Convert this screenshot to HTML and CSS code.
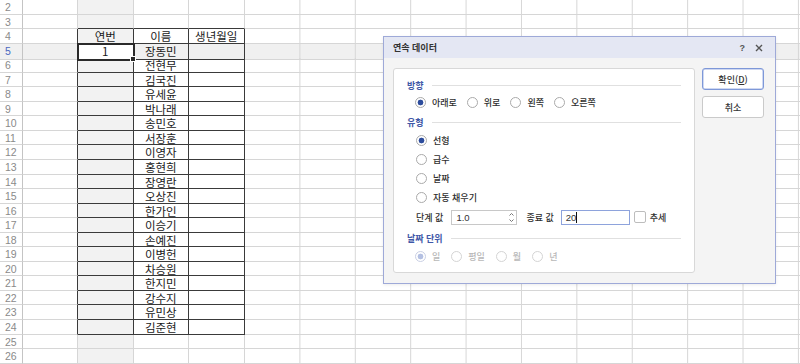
FILE: index.html
```html
<!DOCTYPE html>
<html lang="ko">
<head>
<meta charset="utf-8">
<link rel="stylesheet" href="styles.css">
</head>
<body>
<div class="sheet">
  <div class="row"><div class="rh">2</div><div class="c"></div><div class="c b"></div><div class="c"></div><div class="c"></div><div class="rest"></div></div>
  <div class="row"><div class="rh">3</div><div class="c"></div><div class="c b tt"></div><div class="c tt"></div><div class="c tt"></div><div class="rest"></div></div>
  <div class="row"><div class="rh">4</div><div class="c tl"></div><div class="c b t">연번</div><div class="c t">이름</div><div class="c t">생년월일</div><div class="rest"></div></div>
  <div class="row sel"><div class="rh">5</div><div class="c tl"></div><div class="c b t cur">1</div><div class="c t">장동민</div><div class="c t"></div><div class="rest"></div></div>
  <div class="row"><div class="rh">6</div><div class="c tl"></div><div class="c b t"></div><div class="c t">전현무</div><div class="c t"></div><div class="rest"></div></div>
  <div class="row"><div class="rh">7</div><div class="c tl"></div><div class="c b t"></div><div class="c t">김국진</div><div class="c t"></div><div class="rest"></div></div>
  <div class="row"><div class="rh">8</div><div class="c tl"></div><div class="c b t"></div><div class="c t">유세윤</div><div class="c t"></div><div class="rest"></div></div>
  <div class="row"><div class="rh">9</div><div class="c tl"></div><div class="c b t"></div><div class="c t">박나래</div><div class="c t"></div><div class="rest"></div></div>
  <div class="row"><div class="rh">10</div><div class="c tl"></div><div class="c b t"></div><div class="c t">송민호</div><div class="c t"></div><div class="rest"></div></div>
  <div class="row"><div class="rh">11</div><div class="c tl"></div><div class="c b t"></div><div class="c t">서장훈</div><div class="c t"></div><div class="rest"></div></div>
  <div class="row"><div class="rh">12</div><div class="c tl"></div><div class="c b t"></div><div class="c t">이영자</div><div class="c t"></div><div class="rest"></div></div>
  <div class="row"><div class="rh">13</div><div class="c tl"></div><div class="c b t"></div><div class="c t">홍현희</div><div class="c t"></div><div class="rest"></div></div>
  <div class="row"><div class="rh">14</div><div class="c tl"></div><div class="c b t"></div><div class="c t">장영란</div><div class="c t"></div><div class="rest"></div></div>
  <div class="row"><div class="rh">15</div><div class="c tl"></div><div class="c b t"></div><div class="c t">오상진</div><div class="c t"></div><div class="rest"></div></div>
  <div class="row"><div class="rh">16</div><div class="c tl"></div><div class="c b t"></div><div class="c t">한가인</div><div class="c t"></div><div class="rest"></div></div>
  <div class="row"><div class="rh">17</div><div class="c tl"></div><div class="c b t"></div><div class="c t">이승기</div><div class="c t"></div><div class="rest"></div></div>
  <div class="row"><div class="rh">18</div><div class="c tl"></div><div class="c b t"></div><div class="c t">손예진</div><div class="c t"></div><div class="rest"></div></div>
  <div class="row"><div class="rh">19</div><div class="c tl"></div><div class="c b t"></div><div class="c t">이병헌</div><div class="c t"></div><div class="rest"></div></div>
  <div class="row"><div class="rh">20</div><div class="c tl"></div><div class="c b t"></div><div class="c t">차승원</div><div class="c t"></div><div class="rest"></div></div>
  <div class="row"><div class="rh">21</div><div class="c tl"></div><div class="c b t"></div><div class="c t">한지민</div><div class="c t"></div><div class="rest"></div></div>
  <div class="row"><div class="rh">22</div><div class="c tl"></div><div class="c b t"></div><div class="c t">강수지</div><div class="c t"></div><div class="rest"></div></div>
  <div class="row"><div class="rh">23</div><div class="c tl"></div><div class="c b t"></div><div class="c t">유민상</div><div class="c t"></div><div class="rest"></div></div>
  <div class="row"><div class="rh">24</div><div class="c tl"></div><div class="c b t"></div><div class="c t">김준현</div><div class="c t"></div><div class="rest"></div></div>
  <div class="row"><div class="rh">25</div><div class="c"></div><div class="c b"></div><div class="c"></div><div class="c"></div><div class="rest"></div></div>
  <div class="row"><div class="rh">26</div><div class="c"></div><div class="c b"></div><div class="c"></div><div class="c"></div><div class="rest"></div></div>
</div>

<div class="dlg">
  <div class="dlg-title">
    <span class="dlg-name">연속 데이터</span>
    <span class="dlg-tools"><span class="help">?</span><svg class="close" width="8" height="8" viewBox="0 0 8 8"><path d="M1 1L7 7M7 1L1 7" stroke="#555" stroke-width="1.4"/></svg></span>
  </div>
  <div class="dlg-body">
    <div class="box">
      <div class="sec">방향</div>
      <div class="hr-radios">
        <span class="radio on"><i></i>아래로</span>
        <span class="radio"><i></i>위로</span>
        <span class="radio"><i></i>왼쪽</span>
        <span class="radio"><i></i>오른쪽</span>
      </div>
      <div class="sec sec2">유형</div>
      <div class="vr-radios">
        <span class="radio on"><i></i>선형</span>
        <span class="radio"><i></i>급수</span>
        <span class="radio"><i></i>날짜</span>
        <span class="radio"><i></i>자동 채우기</span>
      </div>
      <div class="step">
        <span>단계 값</span>
        <span class="inp spin">1.0<svg class="arr" width="5" height="11" viewBox="0 0 5 11"><path d="M0.5 3.5L2.5 1.5L4.5 3.5M0.5 7.5L2.5 9.5L4.5 7.5" fill="none" stroke="#777" stroke-width="1"/></svg></span>
        <span class="lbl2">종료 값</span>
        <span class="inp focus">20<b class="caret"></b></span>
        <span class="chk"><i></i>추세</span>
      </div>
      <div class="sec sec3">날짜 단위</div>
      <div class="hr-radios dis">
        <span class="radio on"><i></i>일</span>
        <span class="radio"><i></i>평일</span>
        <span class="radio"><i></i>월</span>
        <span class="radio"><i></i>년</span>
      </div>
    </div>
    <div class="btns">
      <div class="btn def">확인(<u>D</u>)</div>
      <div class="btn">취소</div>
    </div>
  </div>
</div>
</body>
</html>
```
FILE: styles.css
```css
html, body {
  margin: 0;
  padding: 0;
}
body {
  width: 800px;
  height: 364px;
  overflow: hidden;
  background: #fff;
  position: relative;
  font-family: "Noto Sans CJK KR", "Noto Sans", sans-serif;
}

/* ---------- sheet ---------- */
.sheet {
  display: flex;
  flex-direction: column;
}
.row {
  display: grid;
  grid-template-columns: 22.5px 55.5px 55.5px 55.5px 55.5px 1fr;
  height: 14.56px;
}
.row > div {
  box-sizing: border-box;
  border-right: 1px solid #d6d6d6;
  border-bottom: 1px solid #d6d6d6;
  font-size: 11.5px;
  font-weight: normal;
  line-height: 15px;
  color: #1a1a1a;
  text-align: center;
  white-space: nowrap;
  overflow: hidden;
}
.row > .rh {
  font-family: "Liberation Sans Narrow", "Liberation Sans", sans-serif;
  font-size: 10.5px;
  line-height: 14px;
  color: #8a8a8a;
  text-align: left;
  padding-left: 5px;
  border-right-color: #c4c4c4;
}
.row > .rest {
  border-right: none;
  background-image: linear-gradient(to left, #d6d6d6 1px, transparent 1px);
  background-size: 55.4px 100%;
}
.row > .b {
  background-color: #f2f2f2;
}
.sel > div {
  background-color: #f0f0f0;
}
.sel > .rh {
  color: #4a67c0;
}
.row > .tl {
  border-right-color: #3a3a3a;
}
.row > .tt {
  border-bottom-color: #3a3a3a;
}
.row > .t {
  border-right-color: #3a3a3a;
  border-bottom-color: #3a3a3a;
}
.row > .cur {
  background: #fff;
  position: relative;
  overflow: visible;
  outline: 2px solid #2a2a2a;
  outline-offset: -1px;
  z-index: 1;
}
.cur::after {
  content: "";
  position: absolute;
  right: -3px;
  bottom: -3px;
  width: 4px;
  height: 4px;
  background: #2a2a2a;
  border: 1px solid #fff;
}

/* ---------- dialog ---------- */
.dlg {
  position: absolute;
  left: 383px;
  top: 36px;
  width: 393px;
  height: 248px;
  box-sizing: border-box;
  border: 1px solid #9ea9d8;
  background: #f4f4f4;
  font-size: 9px;
  font-weight: 500;
  color: #2e2e2e;
  box-shadow: 0 1px 3px rgba(0,0,0,0.08);
}
.dlg-title {
  height: 21px;
  background: #e4e7f3;
  display: flex;
  align-items: center;
  justify-content: space-between;
  padding: 0 12px 0 9px;
}
.dlg-name {
  font-weight: 700;
  color: #333;
}
.dlg-tools {
  display: flex;
  align-items: center;
  gap: 10px;
}
.help {
  font-family: "Liberation Sans", sans-serif;
  font-weight: bold;
  font-size: 9px;
  color: #555;
}
.dlg-body {
  display: flex;
  align-items: flex-start;
  gap: 7px;
  padding: 10px 0 0 9px;
}
.box {
  width: 302px;
  height: 205px;
  box-sizing: border-box;
  border: 1px solid #d8d8d8;
  border-radius: 3px;
  background: #fff;
  padding: 7px 13px 0 13px;
  display: flex;
  flex-direction: column;
}
.sec {
  display: flex;
  align-items: center;
  height: 18px;
  color: #3f58a8;
  font-weight: 700;
}
.sec::after {
  content: "";
  flex: 1;
  height: 1px;
  background: #e0e0e0;
  margin-left: 8px;
}
.sec2 {
  margin-top: 3px;
}
.sec3 {
  margin-top: 2px;
}
.hr-radios {
  display: flex;
  align-items: center;
  gap: 10px;
  height: 16px;
  padding-left: 8px;
}
.dis {
  height: 18px;
  gap: 11px;
  color: #b8b8b8;
}
.vr-radios {
  display: flex;
  flex-direction: column;
  padding-left: 9px;
}
.vr-radios .radio {
  height: 19px;
}
.radio {
  display: inline-flex;
  align-items: center;
}
.radio i {
  width: 11px;
  height: 11px;
  box-sizing: border-box;
  border: 1px solid #aaaaaa;
  border-radius: 50%;
  background: #fff;
  margin-right: 6px;
}
.radio.on i {
  background: radial-gradient(circle, #2d4c9c 0 2.6px, #fff 3.2px);
}
.dis .radio i {
  border-color: #d4d4d4;
}
.dis .radio.on i {
  border-color: #c9cfe4;
  background: radial-gradient(circle, #b4c0e2 0 2.6px, #fff 3.2px);
}
.step {
  display: flex;
  align-items: center;
  height: 20px;
  padding-left: 9px;
}
.inp {
  position: relative;
  display: inline-flex;
  align-items: center;
  box-sizing: border-box;
  height: 15px;
  border: 1px solid #c8c8c8;
  background: #fff;
  padding-left: 4px;
  font-family: "Liberation Sans", sans-serif;
  font-weight: normal;
  font-size: 9.5px;
  color: #333;
}
.spin {
  width: 66px;
  margin-left: 8px;
}
.arr {
  position: absolute;
  right: 2px;
  top: 1px;
}
.lbl2 {
  margin-left: 9px;
}
.focus {
  width: 69px;
  margin-left: 7px;
  border-color: #8ea3dc;
}
.caret {
  display: inline-block;
  width: 1px;
  height: 11px;
  background: #111;
  margin-left: 0;
}
.chk {
  display: inline-flex;
  align-items: center;
  margin-left: 4px;
}
.chk i {
  width: 12px;
  height: 12px;
  box-sizing: border-box;
  border: 1px solid #bdbdbd;
  border-radius: 2px;
  background: #fff;
  margin-right: 4px;
}
.btns {
  display: flex;
  flex-direction: column;
  gap: 6px;
}
.btn {
  width: 62px;
  height: 22px;
  box-sizing: border-box;
  border: 1px solid #cacaca;
  border-radius: 3px;
  background: #fff;
  display: flex;
  align-items: center;
  justify-content: center;
  color: #333;
}
.btn.def {
  border: 1px solid #7e98d8;
  box-shadow: inset 0 0 0 0.5px #9fb2e4;
}
```
